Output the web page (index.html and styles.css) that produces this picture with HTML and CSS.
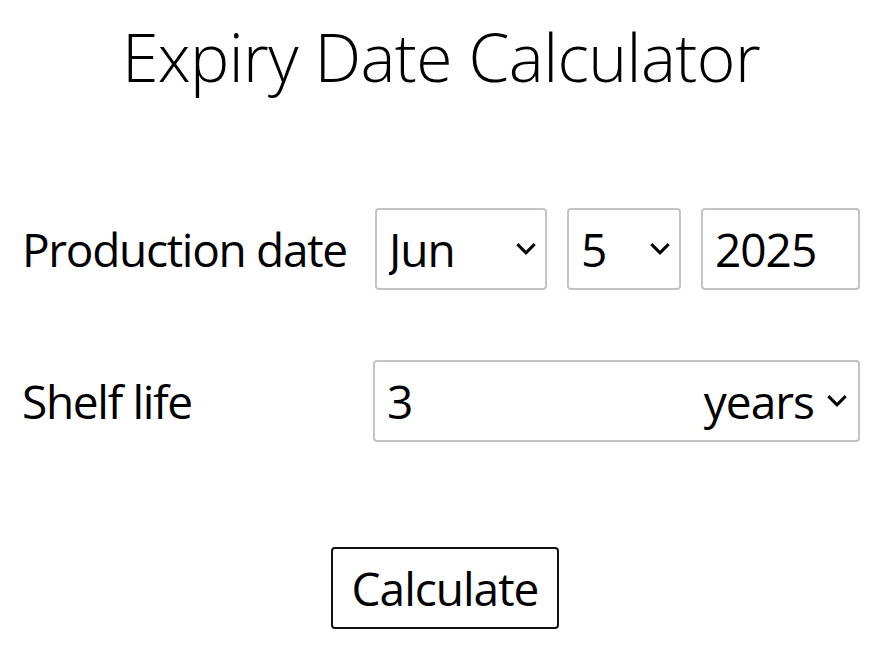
FILE: index.html
```html
<!DOCTYPE html>
<html lang="en">
<head>
    <meta charset="UTF-8">
    <meta name="viewport" content="width=device-width, initial-scale=1.0">
    <title>Expiry Date Calculator</title>
    <link rel="stylesheet" href="styles.css">
</head>
<body>
    <div class="calculator">
        <h1 class="title">Expiry Date Calculator</h1>
        <div class="form-grid">
            <label class="field-label" for="month">Production date</label>
            <div class="date-fields">
                <div class="select-wrap month-wrap">
                    <select id="month" class="field">
                        <option>Jan</option><option>Feb</option><option>Mar</option>
                        <option>Apr</option><option>May</option><option selected>Jun</option>
                        <option>Jul</option><option>Aug</option><option>Sep</option>
                        <option>Oct</option><option>Nov</option><option>Dec</option>
                    </select>
                    <svg class="chevron" viewBox="0 0 20 12"><path d="M2 2 L10 10 L18 2"/></svg>
                </div>
                <div class="select-wrap day-wrap">
                    <select id="day" class="field">
                        <option>1</option><option>2</option><option>3</option><option>4</option>
                        <option selected>5</option><option>6</option><option>7</option>
                    </select>
                    <svg class="chevron" viewBox="0 0 20 12"><path d="M2 2 L10 10 L18 2"/></svg>
                </div>
                <input id="year" class="field year-field" type="text" value="2025">
            </div>

            <label class="field-label" for="shelf">Shelf life</label>
            <div class="combo">
                <input id="shelf" class="combo-input" type="text" value="3">
                <div class="select-wrap unit-wrap">
                    <select class="combo-select">
                        <option>days</option>
                        <option>months</option>
                        <option selected>years</option>
                    </select>
                    <svg class="chevron" viewBox="0 0 20 12"><path d="M2 2 L10 10 L18 2"/></svg>
                </div>
            </div>
        </div>
        <div class="actions">
            <button class="calc-button" type="button">Calculate</button>
        </div>
    </div>
</body>
</html>
```

FILE: styles.css
```css
body {
    margin: 0;
    font-family: "Open Sans", "Noto Sans", sans-serif;
    background-color: #fff;
    color: #000;
}
.calculator {
    padding: 14px 22px 0 22px;
}
.title {
    margin: 0;
    text-align: center;
    font-size: 66px;
    font-weight: 300;
    letter-spacing: -0.6px;
    line-height: 84px;
}
.form-grid {
    display: grid;
    grid-template-columns: 351px minmax(0, 1fr);
    row-gap: 70px;
    align-items: center;
    margin-top: 110px;
}
.field-label {
    font-size: 46px;
    letter-spacing: -1.3px;
    white-space: nowrap;
}
.date-fields {
    display: flex;
    gap: 20px;
    padding-left: 2px;
}
.field {
    box-sizing: border-box;
    height: 82px;
    border: 2px solid #c4c4c4;
    border-radius: 4px;
    background-color: #fff;
    font-family: inherit;
    font-size: 46px;
    letter-spacing: -1px;
    color: #000;
    padding: 0 12px;
    outline: none;
}
select {
    appearance: none;
    -webkit-appearance: none;
    cursor: pointer;
}
.select-wrap {
    position: relative;
}
.select-wrap select {
    width: 100%;
}
.month-wrap {
    width: 172px;
}
.day-wrap {
    width: 114px;
}
.year-field {
    width: 159px;
}
.chevron {
    position: absolute;
    right: 10px;
    top: 50%;
    width: 22px;
    height: 13px;
    margin-top: -7px;
    pointer-events: none;
    fill: none;
    stroke: #000;
    stroke-width: 2.8;
}
.combo {
    box-sizing: border-box;
    display: flex;
    align-items: center;
    height: 82px;
    border: 2px solid #c4c4c4;
    border-radius: 4px;
}
.combo-input {
    flex: 1;
    width: 0;
    min-width: 0;
    border: none;
    outline: none;
    font-family: inherit;
    font-size: 46px;
    letter-spacing: -1px;
    padding: 0 12px;
    background: transparent;
}
.unit-wrap {
    width: 160px;
}
.combo-select {
    border: none;
    background: transparent;
    font-family: inherit;
    font-size: 46px;
    letter-spacing: -1px;
    color: #000;
    padding: 0 44px 0 0;
    text-align: right;
    text-align-last: right;
    outline: none;
}
.unit-wrap .chevron {
    right: 10px;
}
.actions {
    display: flex;
    justify-content: center;
    margin-top: 105px;
    padding-left: 8px;
}
.calc-button {
    box-sizing: border-box;
    height: 82px;
    padding: 0 19px;
    border: 2px solid #111;
    border-radius: 4px;
    background-color: #fff;
    font-family: inherit;
    font-size: 46px;
    letter-spacing: -1px;
    color: #000;
    cursor: pointer;
}
```
